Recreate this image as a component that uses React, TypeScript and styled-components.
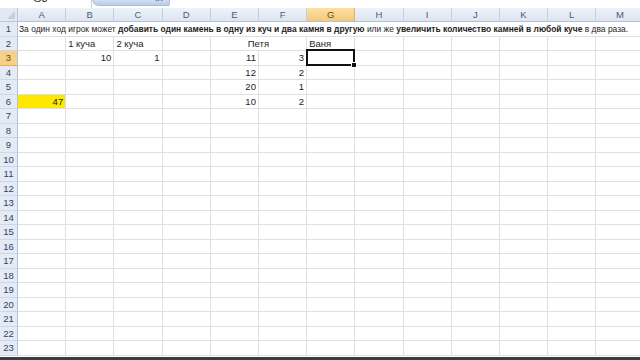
import styled, { createGlobalStyle } from "styled-components";

const GlobalStyle = createGlobalStyle`
    html, body {
        margin: 0;
        padding: 0;
        width: 640px;
        height: 360px;
        overflow: hidden;
        background: #ffffff;
        font-family: "Liberation Sans", Arial, sans-serif;
    }
`;

const Screen = styled.div`
    width: 640px;
    height: 360px;
    display: flex;
    flex-direction: column;
    overflow: hidden;
`;

// strip of the formula bar that is cut off at the top of the picture
const FormulaStrip = styled.div`
    height: 8px;
    display: flex;
    align-items: flex-end;
    overflow: hidden;
    background: #ffffff;
`;

const NameBox = styled.div`
    width: 92px;
    height: 8px;
    position: relative;
    overflow: hidden;
    font-size: 11px;
    color: #333;
    border-right: 1px solid #c9d3df;
    box-sizing: border-box;

    span {
        position: absolute;
        left: 33px;
        top: -8px;
    }
`;

const FxPanel = styled.div`
    width: 76px;
    height: 6px;
    margin-bottom: 2px;
    border-radius: 0 0 4px 10px;
    background: linear-gradient(#d5e2f2, #b9cde6);
    border: 1px solid #a9bfdc;
    border-top: none;
    position: relative;
    overflow: hidden;
    font-size: 10px;
    font-style: italic;
    color: #3a4e6e;

    span {
        position: absolute;
        right: 6px;
        top: -7px;
    }
`;

const Sheet = styled.div`
    display: grid;
    grid-template-columns: 18px repeat(13, 48.2px);
    grid-template-rows: 14px repeat(23, 14.5px);
    flex: 1;
`;

const Corner = styled.div`
    background: #e3e9f2;
    border-right: 1px solid #b8c7da;
    border-bottom: 1px solid #b8c7da;
    box-sizing: border-box;
    position: relative;

    &::after {
        content: "";
        position: absolute;
        right: 2px;
        bottom: 2px;
        border-left: 8px solid transparent;
        border-bottom: 8px solid #c3cfde;
    }
`;

const ColHead = styled.div<{ $active?: boolean }>`
    background: ${(p) =>
        p.$active
            ? "linear-gradient(#fbe0a4, #f5c978)"
            : "linear-gradient(#eef3f9, #dde5f0)"};
    border-right: 1px solid ${(p) => (p.$active ? "#e7b060" : "#c3d0e0")};
    border-bottom: 1px solid #b2c3d8;
    box-sizing: border-box;
    font-size: 9.5px;
    line-height: 14px;
    text-align: center;
    color: ${(p) => (p.$active ? "#6b4a10" : "#4a5b74")};
`;

const RowHead = styled.div<{ $active?: boolean }>`
    background: ${(p) => (p.$active ? "#f7cf86" : "#e4ebf5")};
    border-right: 1px solid #b2c3d8;
    border-bottom: 1px solid ${(p) => (p.$active ? "#e7b060" : "#cdd8e6")};
    box-sizing: border-box;
    font-size: 9.5px;
    line-height: 14px;
    text-align: center;
    color: ${(p) => (p.$active ? "#6b4a10" : "#2f4468")};
`;

const Cell = styled.div<{
    $span?: number;
    $align?: "left" | "right" | "center";
    $fill?: string;
    $selected?: boolean;
}>`
    grid-column: span ${(p) => p.$span ?? 1};
    background: ${(p) => p.$fill ?? "#ffffff"};
    border-right: 1px solid #dddfe1;
    border-bottom: 1px solid #dddfe1;
    box-sizing: border-box;
    padding: 0 2px;
    font-size: 9.5px;
    line-height: 14px;
    color: #1e1e1e;
    text-align: ${(p) => p.$align ?? "left"};
    white-space: nowrap;
    overflow: ${(p) => (p.$selected ? "visible" : "hidden")};
    position: relative;
    z-index: ${(p) => (p.$selected ? 2 : "auto")};
`;

const TitleCell = styled(Cell)`
    font-size: 8.45px;
    padding-left: 1px;
    border-right: none;

    b {
        font-weight: bold;
    }
`;

const Selection = styled.div`
    position: absolute;
    top: -2px;
    left: -1px;
    right: -1px;
    bottom: -1px;
    border: 2px solid #111;

    &::after {
        content: "";
        position: absolute;
        right: -4px;
        bottom: -4px;
        width: 4px;
        height: 4px;
        background: #111;
        border: 1px solid #fff;
    }
`;

const TabsEdge = styled.div`
    height: 3px;
    background: #3b3d40;
`;

const COLS = ["A", "B", "C", "D", "E", "F", "G", "H", "I", "J", "K", "L", "M"];

type CellData = {
    text?: string;
    span?: number;
    align?: "left" | "right" | "center";
    fill?: string;
    selected?: boolean;
};

// columns of each row, from A to M
function row(cells: Record<number, CellData>): CellData[] {
    const out: CellData[] = [];
    let i = 0;
    while (i < COLS.length) {
        const c = cells[i] ?? {};
        out.push(c);
        i += c.span ?? 1;
    }
    return out;
}

const ROWS: CellData[][] = [
    [], // row 1 is the title line
    row({ 1: { text: "1 куча" }, 2: { text: "2 куча" }, 4: { text: "Петя", span: 2, align: "center" }, 6: { text: "Ваня" } }),
    row({ 1: { text: "10", align: "right" }, 2: { text: "1", align: "right" }, 4: { text: "11", align: "right" }, 5: { text: "3", align: "right" }, 6: { selected: true } }),
    row({ 4: { text: "12", align: "right" }, 5: { text: "2", align: "right" } }),
    row({ 4: { text: "20", align: "right" }, 5: { text: "1", align: "right" } }),
    row({ 0: { text: "47", align: "right", fill: "#ffe800" }, 4: { text: "10", align: "right" }, 5: { text: "2", align: "right" } }),
];

function App() {
    const rowCount = 23;
    return (
        <Screen>
            <GlobalStyle />
            <FormulaStrip>
                <NameBox>
                    <span>G3</span>
                </NameBox>
                <FxPanel>
                    <span>fx</span>
                </FxPanel>
            </FormulaStrip>
            <Sheet>
                <Corner />
                {COLS.map((c) => (
                    <ColHead key={c} $active={c === "G"}>
                        {c}
                    </ColHead>
                ))}
                {Array.from({ length: rowCount }, (_, r) => {
                    const n = r + 1;
                    const head = (
                        <RowHead key={`h${n}`} $active={n === 3}>
                            {n}
                        </RowHead>
                    );
                    if (n === 1) {
                        return [
                            head,
                            <TitleCell key="title" $span={13}>
                                За один ход игрок может{" "}
                                <b>добавить один камень в одну из куч и два камня в другую</b> или же{" "}
                                <b>увеличить количество камней в любой куче</b> в два раза.
                            </TitleCell>,
                        ];
                    }
                    const cells = ROWS[r] && ROWS[r].length ? ROWS[r] : row({});
                    return [
                        head,
                        ...cells.map((c, i) => (
                            <Cell
                                key={`${n}-${i}`}
                                $span={c.span}
                                $align={c.align}
                                $fill={c.fill}
                                $selected={c.selected}
                            >
                                {c.text}
                                {c.selected && <Selection />}
                            </Cell>
                        )),
                    ];
                })}
            </Sheet>
            <TabsEdge />
        </Screen>
    );
}

export default App;
